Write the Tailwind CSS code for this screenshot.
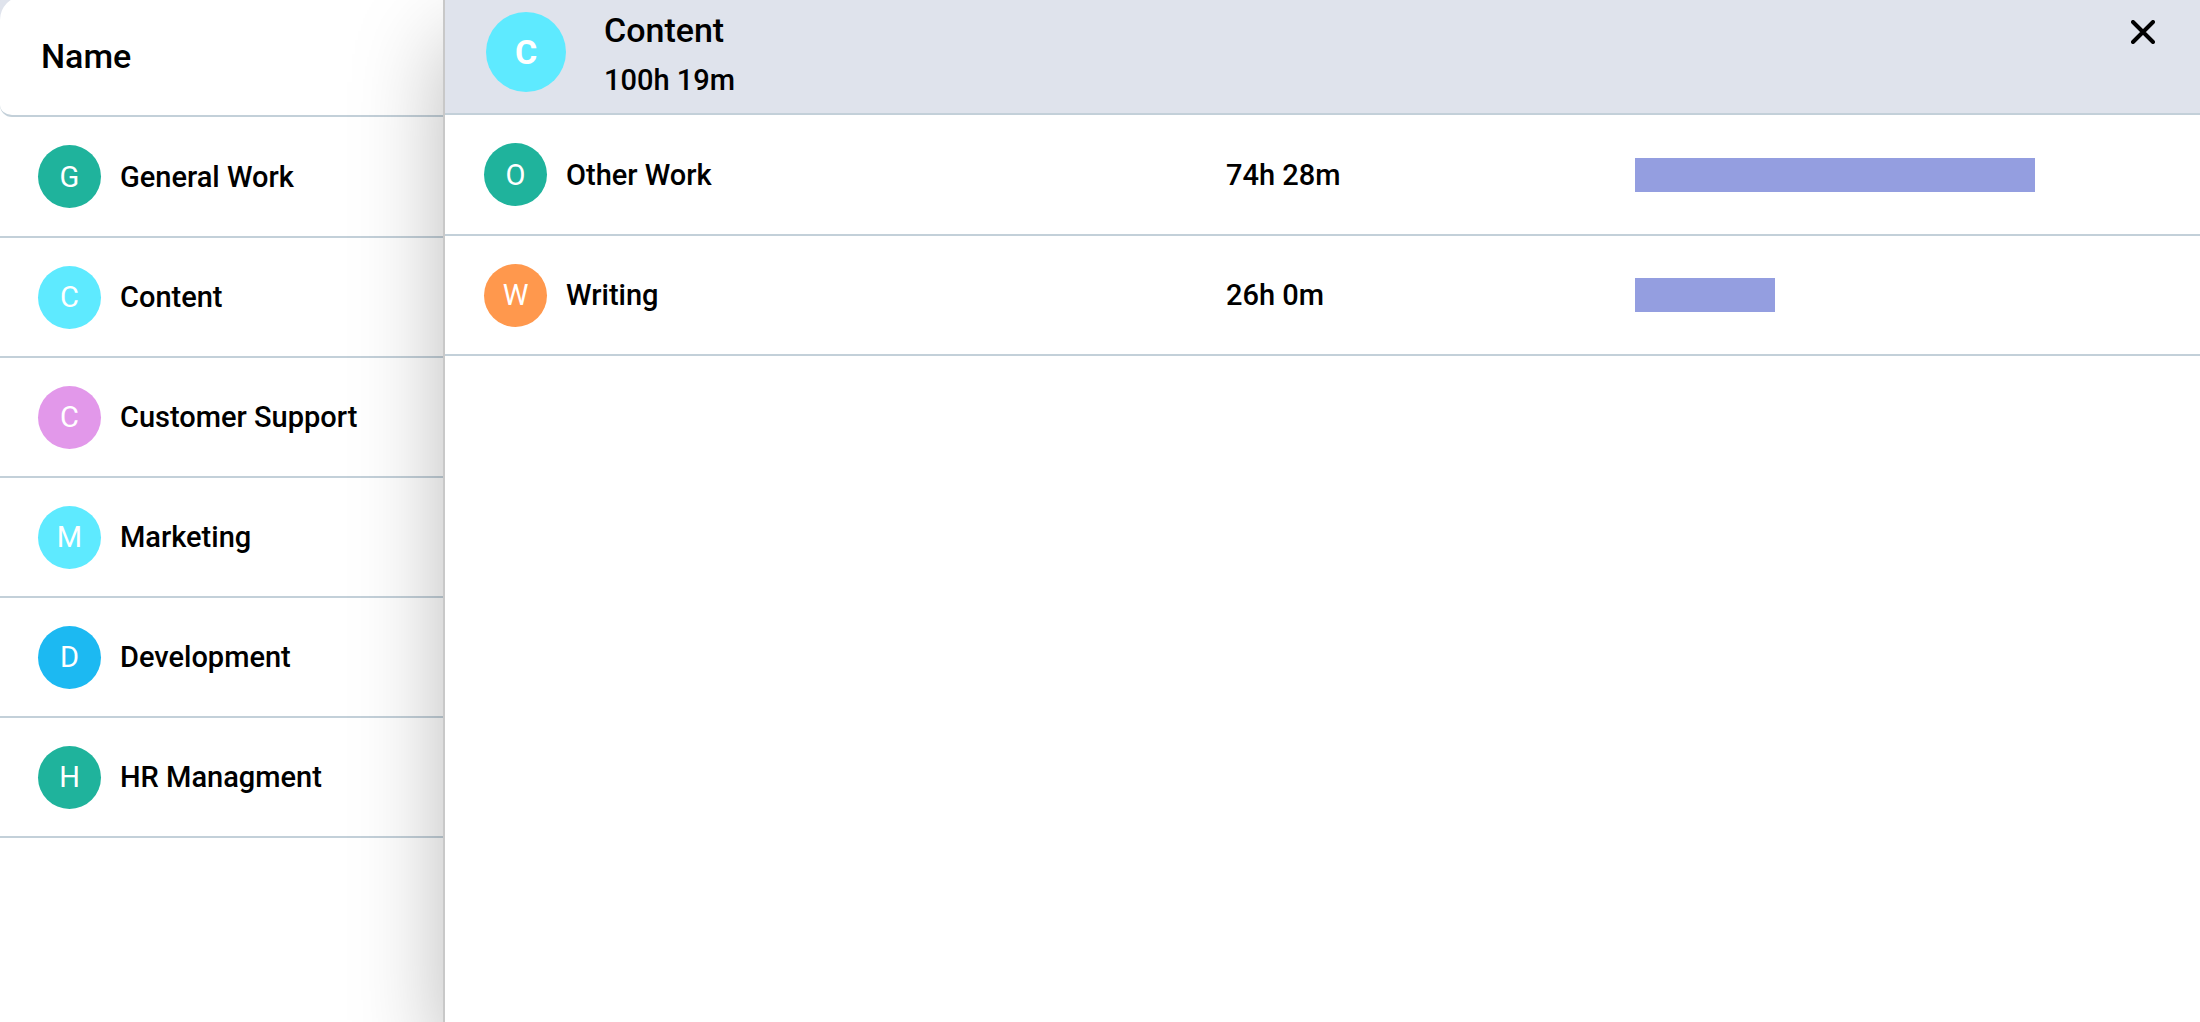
<!DOCTYPE html>
<html lang="en">
    <head>
        <meta charset="utf-8" />
        <title>Time by Project</title>
        <script src="https://cdn.jsdelivr.net/npm/@tailwindcss/browser@4"></script>
    </head>
    <body class="bg-white font-['Roboto',sans-serif] font-medium text-black">
        <div class="flex min-h-screen overflow-hidden">
            <!-- Project list -->
            <aside class="w-[443px] shrink-0">
                <table class="w-full text-[29px] leading-9">
                    <thead>
                        <tr>
                            <th class="p-0 text-left text-[34px] leading-10 font-medium">
                                <div class="flex h-[117px] bg-linear-to-b from-[#dfe3ec] from-50% to-white to-50%">
                                    <div class="-mt-1 flex h-[121px] flex-1 items-center rounded-tl-3xl rounded-bl-xl border-b-2 border-[#c3d0d9] bg-white pl-[41px]">
                                        Name
                                    </div>
                                </div>
                            </th>
                        </tr>
                    </thead>
                    <tbody>
                        <tr class="h-[120px] border-b-2 border-[#c3d0d9]">
                            <td class="pl-[38px]">
                                <div class="flex items-center gap-[19px]">
                                    <span class="flex size-[63px] items-center justify-center rounded-full bg-[#1fb39c] font-normal text-white">G</span>
                                    General Work
                                </div>
                            </td>
                        </tr>
                        <tr class="h-[120px] border-b-2 border-[#c3d0d9]">
                            <td class="pl-[38px]">
                                <div class="flex items-center gap-[19px]">
                                    <span class="flex size-[63px] items-center justify-center rounded-full bg-[#5eeaff] font-normal text-white">C</span>
                                    Content
                                </div>
                            </td>
                        </tr>
                        <tr class="h-[120px] border-b-2 border-[#c3d0d9]">
                            <td class="pl-[38px]">
                                <div class="flex items-center gap-[19px]">
                                    <span class="flex size-[63px] items-center justify-center rounded-full bg-[#e298ea] font-normal text-white">C</span>
                                    Customer Support
                                </div>
                            </td>
                        </tr>
                        <tr class="h-[120px] border-b-2 border-[#c3d0d9]">
                            <td class="pl-[38px]">
                                <div class="flex items-center gap-[19px]">
                                    <span class="flex size-[63px] items-center justify-center rounded-full bg-[#5eeaff] font-normal text-white">M</span>
                                    Marketing
                                </div>
                            </td>
                        </tr>
                        <tr class="h-[120px] border-b-2 border-[#c3d0d9]">
                            <td class="pl-[38px]">
                                <div class="flex items-center gap-[19px]">
                                    <span class="flex size-[63px] items-center justify-center rounded-full bg-[#1cb9f2] font-normal text-white">D</span>
                                    Development
                                </div>
                            </td>
                        </tr>
                        <tr class="h-[120px] border-b-2 border-[#c3d0d9]">
                            <td class="pl-[38px]">
                                <div class="flex items-center gap-[19px]">
                                    <span class="flex size-[63px] items-center justify-center rounded-full bg-[#1fb39c] font-normal text-white">H</span>
                                    HR Managment
                                </div>
                            </td>
                        </tr>
                    </tbody>
                </table>
            </aside>

            <!-- Detail panel -->
            <main class="z-10 min-w-0 flex-1 border-l-2 border-[#c8c8c8] bg-white shadow-[0_40px_84px_rgba(0,0,0,0.27)]">
                <header class="flex h-[115px] items-start border-b-2 border-[#c3d0d9] bg-[#dfe3ec] pt-[10px] pr-[45px] pl-[41px]">
                    <span class="mt-0.5 flex size-20 items-center justify-center rounded-full bg-[#5eeaff] text-[34px] leading-10 font-bold text-white">C</span>
                    <div class="ml-[38px]">
                        <h1 class="text-[34px] leading-10">Content</h1>
                        <p class="pt-3 text-[29px] leading-9">100h 19m</p>
                    </div>
                    <button type="button" aria-label="Close" class="ml-auto pt-[10px]">
                        <svg class="size-6" viewBox="0 0 24 24" fill="none" stroke="currentColor" stroke-width="4" stroke-linecap="round">
                            <path d="M2 2l20 20M22 2L2 22" />
                        </svg>
                    </button>
                </header>
                <table class="w-full table-fixed text-[29px] leading-9">
                    <colgroup>
                        <col />
                        <col class="w-[409px]" />
                        <col class="w-[565px]" />
                    </colgroup>
                    <tbody>
                        <tr class="h-[120px] border-b-2 border-[#c3d0d9]">
                            <td class="pl-[39px]">
                                <div class="flex items-center gap-[19px]">
                                    <span class="flex size-[63px] items-center justify-center rounded-full bg-[#1fb39c] font-normal text-white">O</span>
                                    Other Work
                                </div>
                            </td>
                            <td>74h 28m</td>
                            <td class="pr-[26px]">
                                <div class="h-[34px] bg-[#949ee0]" style="width: 74.2%"></div>
                            </td>
                        </tr>
                        <tr class="h-[120px] border-b-2 border-[#c3d0d9]">
                            <td class="pl-[39px]">
                                <div class="flex items-center gap-[19px]">
                                    <span class="flex size-[63px] items-center justify-center rounded-full bg-[#ff984d] font-normal text-white">W</span>
                                    Writing
                                </div>
                            </td>
                            <td>26h 0m</td>
                            <td class="pr-[26px]">
                                <div class="h-[34px] bg-[#949ee0]" style="width: 25.9%"></div>
                            </td>
                        </tr>
                    </tbody>
                </table>
            </main>
        </div>
    </body>
</html>
